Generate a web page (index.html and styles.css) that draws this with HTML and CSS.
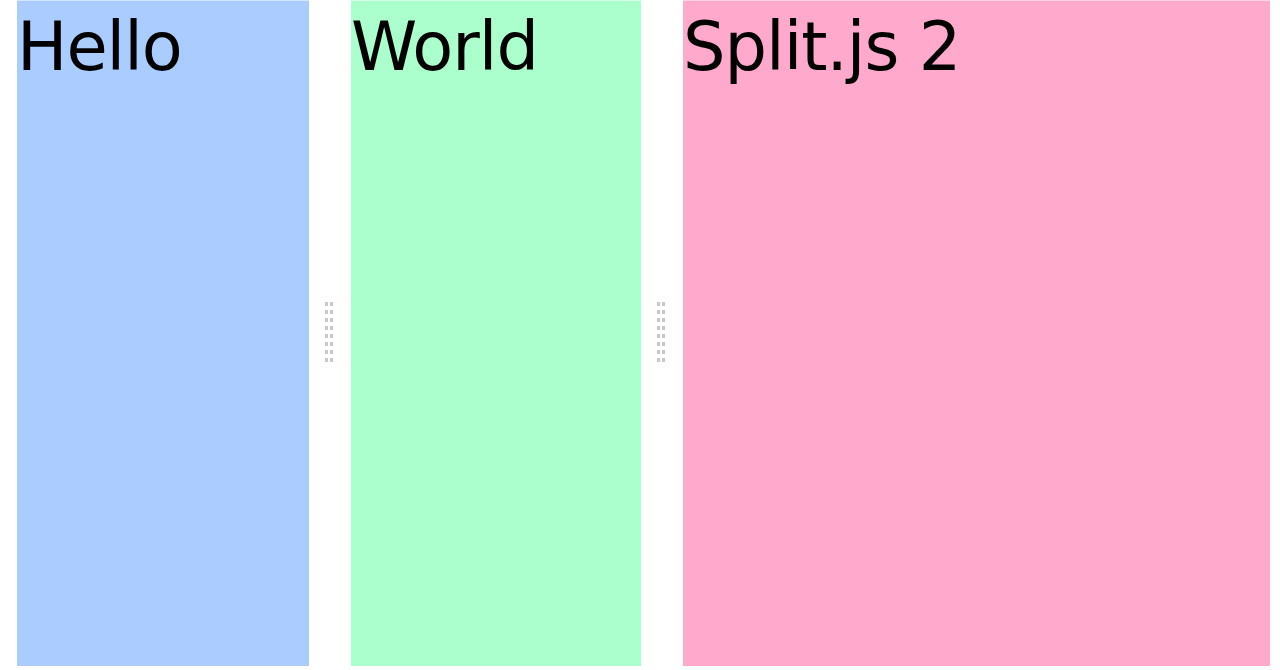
FILE: index.html
```html
<!DOCTYPE html>
<html>
<head>
    <title>Split.js</title>
    <link rel="stylesheet" href="styles.css">
</head>
<body>
    <div class="split">
        <div class="pane pane-blue">
            <h1>Hello</h1>
        </div>
        <div class="gutter"><span class="grip"></span></div>
        <div class="pane pane-green">
            <h1>World</h1>
        </div>
        <div class="gutter"><span class="grip"></span></div>
        <div class="pane pane-pink">
            <h1>Split.js 2</h1>
        </div>
    </div>
</body>
</html>
```
FILE: styles.css
```css
html, body {
    margin: 0;
    padding: 0;
    background-color: #fff;
}

body {
    font-family: "DejaVu Sans", Verdana, sans-serif;
    padding: 0 10px 4px 17px;
    height: 670px;
    box-sizing: border-box;
}

.split {
    display: flex;
    height: 666px;
}

.pane {
    box-sizing: border-box;
    padding-top: 13px;
    border-top: 1px solid rgba(255, 255, 255, 0.5);
    overflow: hidden;
}

.pane h1 {
    margin: 0;
    font-size: 67px;
    font-weight: normal;
    letter-spacing: -1px;
    line-height: 1;
    color: #000;
    white-space: nowrap;
}

.pane-blue {
    width: 292px;
    background-color: #aaccff;
}

.pane-green {
    width: 290px;
    background-color: #aaffcc;
}

.pane-pink {
    flex: 1;
    background-color: #ffaacc;
}

/* the gutter between panes, with the little dotted handle */
.gutter {
    width: 42px;
    display: flex;
    align-items: center;
    justify-content: center;
    cursor: col-resize;
}

.grip {
    display: block;
    width: 10px;
    height: 64px;
    margin-top: 2px;
    background-image:
        linear-gradient(90deg, #e8b8d0 0 1px, #a8dcc4 1px 2px, #d8bccc 2px 3px, transparent 3px),
        linear-gradient(90deg, #b0d8c8 0 1px, #e4bcd0 1px 2px, #b4d4cc 2px 3px, transparent 3px);
    background-size: 5px 8px, 5px 8px;
    background-position: 0 0, 0 2px;
    background-repeat: repeat;
    -webkit-mask-image: linear-gradient(#000 0 4px, transparent 4px);
    -webkit-mask-size: 10px 8px;
    mask-image: linear-gradient(#000 0 4px, transparent 4px);
    mask-size: 10px 8px;
}
```
